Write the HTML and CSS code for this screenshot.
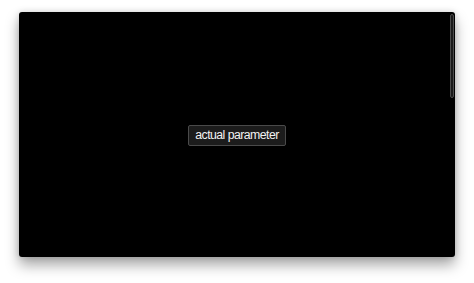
FILE: index.html
```html
<!DOCTYPE html>
<html>
<head>
<meta charset="utf-8">
<link rel="stylesheet" href="styles.css">
</head>
<body>
<div class="stage">
  <div class="window">
    <div class="content">
      <span class="label">actual parameter</span>
    </div>
    <div class="scrollbar"><div class="thumb"></div></div>
  </div>
</div>
</body>
</html>
```
FILE: styles.css
```css
html, body {
  margin: 0;
  padding: 0;
  background: #ffffff;
  width: 474px;
  height: 283px;
  overflow: hidden;
}
.stage {
  padding: 12px 19px 0 19px;
}
.window {
  width: 436px;
  height: 245px;
  background: #000;
  border-radius: 3px;
  box-shadow: 0 8px 14px rgba(0,0,0,0.35), 0 0 6px rgba(0,0,0,0.15);
  display: flex;
  position: relative;
}
.content {
  flex: 1;
  display: flex;
  align-items: center;
  justify-content: center;
}
.label {
  font-family: "Liberation Sans", Arial, sans-serif;
  font-size: 12.3px;
  letter-spacing: -0.55px;
  color: #f2f2f2;
  background: #1c1c1c;
  border: 1px solid #4a4a4a;
  border-radius: 2px;
  padding: 2px 6px 2px 6px;
  line-height: 15px;
  margin-top: 2px;
}
.scrollbar {
  position: absolute;
  top: 2px;
  right: 0;
  width: 5px;
}
.thumb {
  width: 2px;
  height: 82px;
  border: 1px solid #4a4a4a;
  background: #1a1a1a;
  border-radius: 2px;
}
```
